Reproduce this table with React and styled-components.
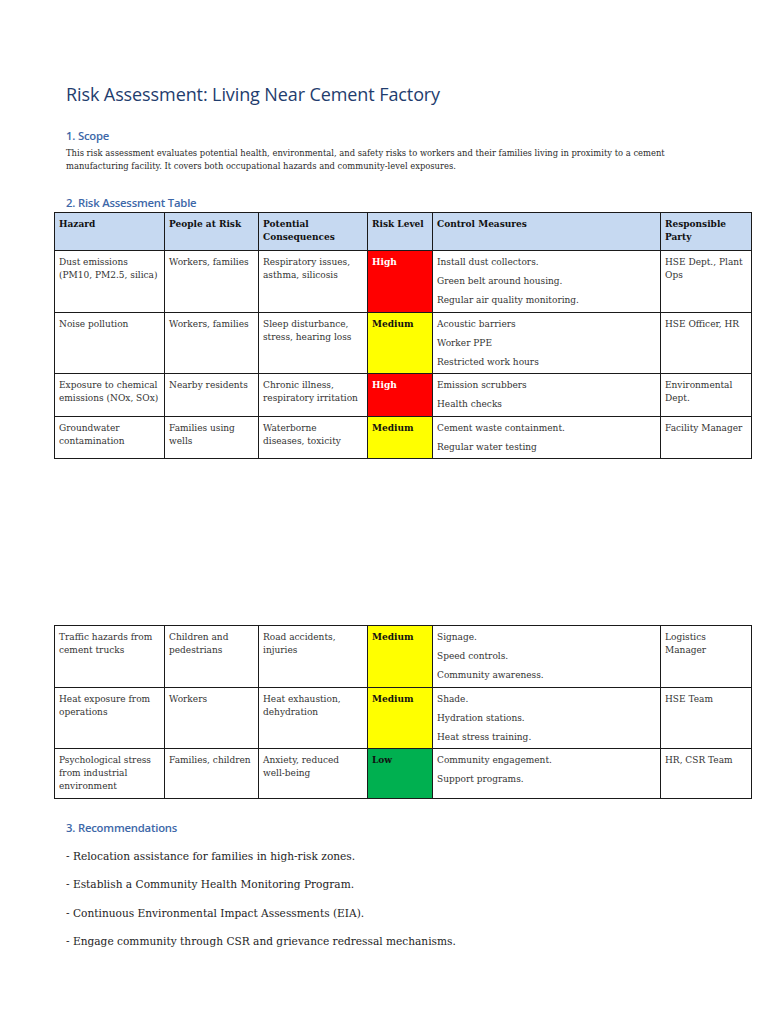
import React from "react";
import styled, { createGlobalStyle } from "styled-components";

const GlobalStyle = createGlobalStyle`
  html, body {
    margin: 0;
    padding: 0;
    background: #ffffff;
  }
`;

const Page = styled.div`
  width: 768px;
  min-height: 1024px;
  box-sizing: border-box;
  padding: 81px 18px 40px 66px;
  font-family: "DejaVu Serif", "Liberation Serif", serif;
  color: #2b2b2b;
`;

const Title = styled.h1`
  margin: 0 0 21px;
  font-family: "Open Sans", "Noto Sans", sans-serif;
  font-weight: 400;
  font-size: 18px;
  line-height: 26px;
  color: #1f3d6e;
  letter-spacing: -0.1px;
`;

const Heading = styled.h2`
  margin: ${props => props.$top || 0}px 0 ${props => props.$bottom || 0}px;
  font-family: "Open Sans", "Noto Sans", sans-serif;
  font-weight: 600;
  font-size: 11.3px;
  line-height: 16px;
  color: #3d67a8;
  letter-spacing: -0.2px;
`;

const Paragraph = styled.p`
  margin: 3px 0 22px;
  max-width: 640px;
  font-size: 8.4px;
  line-height: 13px;
  color: #2b2b2b;
`;

const RiskTable = styled.table`
  margin: ${props => props.$top || 0}px 0 0 -12px;
  width: 697px;
  border-collapse: collapse;
  table-layout: fixed;
  font-size: 9px;
  line-height: 13px;
`;

const HeadCell = styled.th`
  background: #c6d9f1;
  border: 1px solid #1a1a1a;
  padding: 5px 3px 6px 4px;
  text-align: left;
  vertical-align: top;
  font-weight: 700;
  color: #111;
`;

const Cell = styled.td`
  border: 1px solid #1a1a1a;
  padding: 5px 3px 4.5px 4px;
  vertical-align: top;
  color: #333;
  white-space: pre-line;
`;

const levelColors = {
  High: { bg: "#ff0000", fg: "#ffffff" },
  Medium: { bg: "#ffff00", fg: "#111111" },
  Low: { bg: "#00b050", fg: "#111111" }
};

const LevelCell = styled(Cell)`
  background: ${props => levelColors[props.$level].bg};
  color: ${props => levelColors[props.$level].fg};
  font-weight: 700;
`;

const Measure = styled.div`
  margin-bottom: 6px;

  &:last-child {
    margin-bottom: 0;
  }
`;

const List = styled.div`
  margin-top: 12px;
  display: flex;
  flex-direction: column;
  gap: 12px;
`;

const Item = styled.p`
  margin: 0;
  font-size: 10.6px;
  line-height: 16.5px;
  color: #1e1e1e;
`;

const colWidths = [110, 94, 109, 65, 228, 91];

const firstRows = [
  {
    hazard: "Dust emissions (PM10, PM2.5, silica)",
    people: "Workers, families",
    consequences: "Respiratory issues, asthma, silicosis",
    level: "High",
    measures: [
      "Install dust collectors.",
      "Green belt around housing.",
      "Regular air quality monitoring."
    ],
    party: "HSE Dept., Plant Ops"
  },
  {
    hazard: "Noise pollution",
    people: "Workers, families",
    consequences: "Sleep disturbance, stress, hearing loss",
    level: "Medium",
    measures: ["Acoustic barriers", "Worker PPE", "Restricted work hours"],
    party: "HSE Officer, HR"
  },
  {
    hazard: "Exposure to chemical emissions (NOx, SOx)",
    people: "Nearby residents",
    consequences: "Chronic illness, respiratory irritation",
    level: "High",
    measures: ["Emission scrubbers", "Health checks"],
    party: "Environmental Dept."
  },
  {
    hazard: "Groundwater contamination",
    people: "Families using wells",
    consequences: "Waterborne\ndiseases, toxicity",
    level: "Medium",
    measures: ["Cement waste containment.", "Regular water testing"],
    party: "Facility Manager"
  }
];

const secondRows = [
  {
    hazard: "Traffic hazards from cement trucks",
    people: "Children and pedestrians",
    consequences: "Road accidents, injuries",
    level: "Medium",
    measures: ["Signage.", "Speed controls.", "Community awareness."],
    party: "Logistics Manager"
  },
  {
    hazard: "Heat exposure from operations",
    people: "Workers",
    consequences: "Heat exhaustion, dehydration",
    level: "Medium",
    measures: ["Shade.", "Hydration stations.", "Heat stress training."],
    party: "HSE Team"
  },
  {
    hazard: "Psychological stress from industrial environment",
    people: "Families, children",
    consequences: "Anxiety, reduced\nwell-being",
    level: "Low",
    measures: ["Community engagement.", "Support programs."],
    party: "HR, CSR Team"
  }
];

const recommendations = [
  "- Relocation assistance for families in high-risk zones.",
  "- Establish a Community Health Monitoring Program.",
  "- Continuous Environmental Impact Assessments (EIA).",
  "- Engage community through CSR and grievance redressal mechanisms."
];

const Cols = () => (
  <colgroup>
    {colWidths.map((w, i) => (
      <col key={i} style={{ width: w }} />
    ))}
  </colgroup>
);

const RiskRow = ({ row }) => (
  <tr>
    <Cell>{row.hazard}</Cell>
    <Cell>{row.people}</Cell>
    <Cell>{row.consequences}</Cell>
    <LevelCell $level={row.level}>{row.level}</LevelCell>
    <Cell>
      {row.measures.map(m => (
        <Measure key={m}>{m}</Measure>
      ))}
    </Cell>
    <Cell>{row.party}</Cell>
  </tr>
);

const App = () => (
  <>
    <GlobalStyle />
    <Page>
      <Title>Risk Assessment: Living Near Cement Factory</Title>
      <Heading>1. Scope</Heading>
      <Paragraph>
        This risk assessment evaluates potential health, environmental, and
        safety risks to workers and their families living in proximity to a
        cement manufacturing facility. It covers both occupational hazards and
        community-level exposures.
      </Paragraph>
      <Heading $bottom={1}>2. Risk Assessment Table</Heading>
      <RiskTable>
        <Cols />
        <thead>
          <tr>
            <HeadCell>Hazard</HeadCell>
            <HeadCell>People at Risk</HeadCell>
            <HeadCell>Potential Consequences</HeadCell>
            <HeadCell>Risk Level</HeadCell>
            <HeadCell>Control Measures</HeadCell>
            <HeadCell>Responsible Party</HeadCell>
          </tr>
        </thead>
        <tbody>
          {firstRows.map(r => (
            <RiskRow key={r.hazard} row={r} />
          ))}
        </tbody>
      </RiskTable>
      <RiskTable $top={166}>
        <Cols />
        <tbody>
          {secondRows.map(r => (
            <RiskRow key={r.hazard} row={r} />
          ))}
        </tbody>
      </RiskTable>
      <Heading $top={21}>3. Recommendations</Heading>
      <List>
        {recommendations.map(r => (
          <Item key={r}>{r}</Item>
        ))}
      </List>
    </Page>
  </>
);

export default App;
